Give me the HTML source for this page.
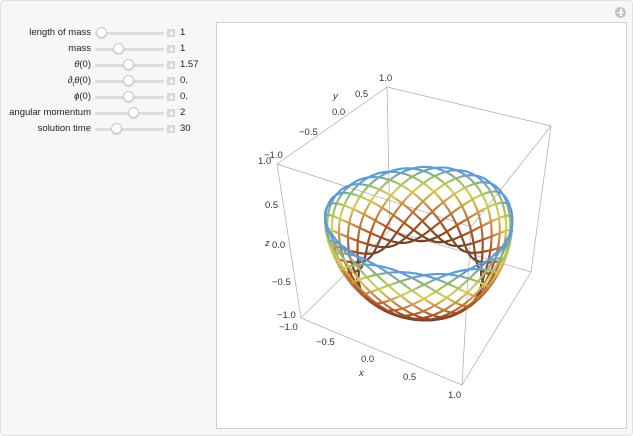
<!DOCTYPE html>
<html><head><meta charset="utf-8">
<style>
html,body{margin:0;padding:0;width:633px;height:436px;overflow:hidden;background:#fff;font-family:"Liberation Sans",sans-serif;}
#outer{position:absolute;left:0;top:0;width:631px;height:434px;background:#f7f7f7;border:1px solid #e2e2e2;border-radius:4px;}
#panel{position:absolute;left:216px;top:22px;width:409px;height:405px;background:#fff;border:1px solid #cfcfcf;}
.row{position:absolute;left:0;height:14px;font-size:9.5px;color:#222;width:633px}
.lab{position:absolute;left:-9px;top:0;white-space:nowrap;text-align:right;width:100px;line-height:14px;}
.track{position:absolute;left:95px;top:6px;width:69px;height:3px;background:#ddd;border-radius:2px;}
.thumb{position:absolute;top:1px;width:11px;height:11px;border-radius:50%;background:#fff;border:1px solid #c8c8c8;box-shadow:0 1px 1px rgba(0,0,0,.15);box-sizing:border-box;}
.plus{position:absolute;left:167px;top:3px;width:8px;height:8px;background:#d6d6d6;border-radius:1px;}
.plus:before{content:"";position:absolute;left:3.5px;top:1.5px;width:1px;height:5px;background:#fff;}
.plus:after{content:"";position:absolute;left:1.5px;top:3.5px;width:5px;height:1px;background:#fff;}
.val{position:absolute;left:180px;top:0;line-height:14px;}
svg text{font-family:"Liberation Sans",sans-serif;font-size:9.5px;fill:#333;}
</style></head><body>
<div id="outer"></div>
<div style="position:absolute;left:615px;top:7px;width:11px;height:11px;border-radius:50%;background:#c4c4c4;"></div>
<div style="position:absolute;left:620px;top:9px;width:1.5px;height:7px;background:#fff;"></div>
<div style="position:absolute;left:617px;top:11.8px;width:7px;height:1.5px;background:#fff;"></div>

<div class="row" style="top:26px"><span class="lab">length of mass</span><div class="track"></div><div class="thumb" style="left:96px"></div><div class="plus"></div><span class="val">1</span></div>
<div class="row" style="top:42px"><span class="lab">mass</span><div class="track"></div><div class="thumb" style="left:113px"></div><div class="plus"></div><span class="val">1</span></div>
<div class="row" style="top:58px"><span class="lab"><i>θ</i>(0)</span><div class="track"></div><div class="thumb" style="left:123px"></div><div class="plus"></div><span class="val">1.57</span></div>
<div class="row" style="top:74px"><span class="lab">∂<sub style="font-size:6px">t</sub><i>θ</i>(0)</span><div class="track"></div><div class="thumb" style="left:123px"></div><div class="plus"></div><span class="val">0.</span></div>
<div class="row" style="top:90px"><span class="lab"><i>ϕ</i>(0)</span><div class="track"></div><div class="thumb" style="left:123px"></div><div class="plus"></div><span class="val">0.</span></div>
<div class="row" style="top:106px"><span class="lab">angular momentum</span><div class="track"></div><div class="thumb" style="left:128px"></div><div class="plus"></div><span class="val">2</span></div>
<div class="row" style="top:122px"><span class="lab">solution time</span><div class="track"></div><div class="thumb" style="left:111px"></div><div class="plus"></div><span class="val">30</span></div>

<div id="panel"></div>
<svg id="plot" width="633" height="436" style="position:absolute;left:0;top:0">
<g stroke="#aaa" stroke-width="0.7" fill="none">
<polyline points="277,164 387,87 551,126 471,227 277,164"/>
<line x1="277" y1="164" x2="301" y2="318"/>
<line x1="551" y1="126" x2="531" y2="272"/>
<line x1="471" y1="227" x2="462" y2="385"/>
<line x1="387" y1="87" x2="390" y2="230"/>
<polyline points="301,318 462,385 531,272 390,230 301,318"/>
</g>
<g id="bowl"></g>
<g>
<text x="379" y="81">1.0</text>
<text x="355" y="97">0.5</text>
<text x="332" y="115">0.0</text>
<text x="299" y="135">−0.5</text>
<text x="333" y="99" font-style="italic">y</text>
<text x="264" y="158">−1.0</text>
<text x="258" y="164">1.0</text>
<text x="265" y="208">0.5</text>
<text x="272" y="248">0.0</text>
<text x="265" y="246" font-style="italic">z</text>
<text x="272" y="285">−0.5</text>
<text x="277" y="318">−1.0</text>
<text x="279" y="330">−1.0</text>
<text x="316" y="345">−0.5</text>
<text x="361" y="362">0.0</text>
<text x="359" y="376" font-style="italic">x</text>
<text x="403" y="380">0.5</text>
<text x="448" y="398">1.0</text>
</g>
</svg>
<script>
(function(){
var C={'-1-1-1':[301,318],'1-1-1':[462,385],'-1-11':[277,164],'1-11':[471,227],'-11-1':[390,230],'11-1':[531,272],'-111':[387,87],'111':[551,126]};
function P(x,y,z){var u=(x+1)/2,v=(y+1)/2,w=(z+1)/2,r=[0,0];
[-1,1].forEach(function(a){[-1,1].forEach(function(b){[-1,1].forEach(function(c){
var k=(a>0?u:1-u)*(b>0?v:1-v)*(c>0?w:1-w);var p=C[''+a+b+c];r[0]+=k*p[0];r[1]+=k*p[1];});});});return r;}
function col(z){
var t=(z+0.75)/0.9; if(t<0)t=0; if(t>1)t=1;
var st=[[0,[100,65,40]],[0.2,[170,80,35]],[0.42,[200,140,70]],[0.62,[215,205,90]],[0.8,[150,185,110]],[0.93,[95,155,215]],[1,[90,155,220]]];
for(var i=0;i<st.length-1;i++){if(t<=st[i+1][0]){var f=(t-st[i][0])/(st[i+1][0]-st[i][0]);var a=st[i][1],b=st[i+1][1];
return 'rgb('+Math.round(a[0]+(b[0]-a[0])*f)+','+Math.round(a[1]+(b[1]-a[1])*f)+','+Math.round(a[2]+(b[2]-a[2])*f)+')';}}
return 'rgb(90,155,220)';}
var a1=0.78,a2=1.68,N=25,dphi=2*Math.PI*(12/25),steps=N*120,segs=[],prev=null;
for(var i=0;i<=steps;i++){var t=i/120;var al=(a1+a2)/2+(a2-a1)/2*Math.cos(2*Math.PI*t);
var ph=dphi*t+0.3;var x=Math.sin(al)*Math.cos(ph),y=Math.sin(al)*Math.sin(ph),z=-Math.cos(al);
var q=P(x,y,z);if(prev){segs.push([prev[0],prev[1],q[0],q[1],(y+prev[2])/2,(z+prev[3])/2]);}prev=[q[0],q[1],y,z];}
segs.sort(function(a,b){return b[4]-a[4];});
var s='';segs.forEach(function(g){s+='<line x1="'+g[0].toFixed(1)+'" y1="'+g[1].toFixed(1)+'" x2="'+g[2].toFixed(1)+'" y2="'+g[3].toFixed(1)+'" stroke="'+col(g[5])+'"/>';});
var b=document.getElementById('bowl');b.setAttribute('stroke-width','2.1');b.setAttribute('stroke-linecap','round');b.innerHTML=s;
})();
</script>
</body></html>
